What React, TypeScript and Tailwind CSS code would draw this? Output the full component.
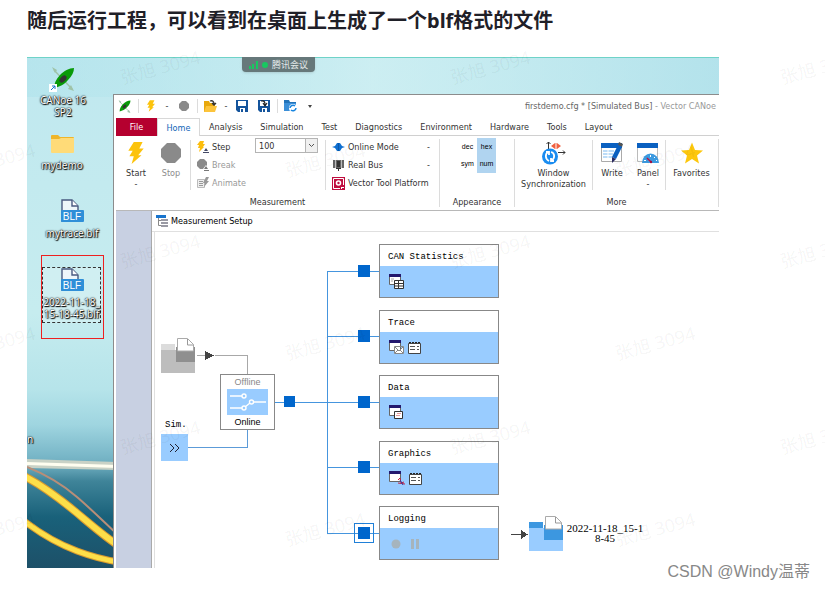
import React from 'react';

type IconProps = { className?: string };

const CanoeIcon: React.FC<IconProps> = ({ className }) => (
  <svg viewBox="0 0 24 24" className={className}>
    <path d="M3 3 L21 22" stroke="#9fc3a8" strokeWidth="1.4" />
    <path d="M1 0 L6 3 L4 6 Z M23 24 L17 22 L20 18 Z" fill="#9fc3a8" />
    <path d="M23 1 C18 1 13 4 9 8 C5 12 3 17 3 21 C8 20 13 18 17 13 C21 9 23 5 23 1 Z" fill="#089a08" />
    <ellipse cx="12" cy="12" rx="4.2" ry="2.6" transform="rotate(-45 12 12)" fill="#333" />
  </svg>
);

const BoltIcon: React.FC<IconProps> = ({ className }) => (
  <svg viewBox="0 0 14 20" className={className}>
    <path d="M5 0 H13 L10 6 H14 L9 12 H12 L3 20 L5 13 H1 L4 8 H0 Z" fill="#fcc30c" />
  </svg>
);

const StopIcon: React.FC<IconProps> = ({ className }) => (
  <svg viewBox="0 0 20 20" className={className}>
    <path d="M6 0 H14 L20 6 V14 L14 20 H6 L0 14 V6 Z" fill="#8a8a8a" />
  </svg>
);

const OpenIcon: React.FC<IconProps> = ({ className }) => (
  <svg viewBox="0 0 13 12" className={className}>
    <path d="M0 1 H5 L6 3 H11 V12 H0 Z" fill="#e8a80c" />
    <path d="M2 6 H13 L11 12 H0 Z" fill="#fcc43c" />
    <path d="M6 1 C9 0 10 2 10 4 M8 3 L10 5 L12 3" stroke="#333" strokeWidth="1.3" fill="none" />
  </svg>
);

const SaveIcon: React.FC<{ arrow?: boolean }> = ({ arrow }) => (
  <svg viewBox="0 0 12 12" className="h-3 w-3">
    <path d="M0 0 H12 V12 H2 L0 10 Z" fill="#14549c" />
    <path d="M2 1 H10 V6 H2 Z M4 8 H9 V12 H4 Z" fill="#fff" />
    <path d="M5 9 H7 V12 H5 Z" fill="#14549c" />
    {arrow && <path d="M3 1 C7 0 7 3 7 5 M5 3 L7 6 L9 3" stroke="#222" strokeWidth="1.2" fill="none" />}
  </svg>
);

const WebFolderIcon = () => (
  <svg viewBox="0 0 13 12" className="h-3 w-[13px]">
    <path d="M0 0 H5 L6 2 H12 V11 H0 Z" fill="#2273b9" />
    <path d="M0 3 H12 V11 H0 Z" fill="#3b8fd8" />
    <circle cx="9" cy="8" r="4" fill="#fff" />
    <path d="M6 8 A3 3 0 0 1 11 6 M12 8 A3 3 0 0 1 7 10" stroke="#1886e0" strokeWidth="1.5" fill="none" />
  </svg>
);

const StepIcon = () => (
  <svg viewBox="0 0 12 12" className="h-3 w-3">
    <path d="M3 0 H7 L6 3 H8 L6 6 H7 L2 11 L3 7 H1 L2 4 H0 Z" fill="#fcbd0c" />
    <path d="M7 10 L9 7 L11 10 Z M6 11 H12 V12 H6 Z" fill="#444a66" />
  </svg>
);

const BreakIcon = () => (
  <svg viewBox="0 0 12 12" className="h-3 w-3">
    <path d="M3 0 H7 L10 3 V7 L7 10 H3 L0 7 V3 Z" fill="#8a8a8a" />
    <path d="M6 10 L9 6 L12 10 V12 H6 Z" fill="#fff" />
    <path d="M7 10 L9 7 L11 10 Z M7 11 H12 V12 H7 Z" fill="#777" />
  </svg>
);

const AnimateIcon = () => (
  <svg viewBox="0 0 12 12" className="h-3 w-3">
    <path d="M.5 2.500 H7.500 V10.500 H.5 Z" fill="#eee" stroke="#bbb" />
    <path d="M2 4.500 H6 M2 6.500 H6 M2 8.500 H6" stroke="#999" />
    <path d="M9 0 H12 L10 4 H12 L7 10 L8 6 H6 Z" fill="#999" />
  </svg>
);

const OnlineIcon = () => (
  <svg viewBox="0 0 13 12" className="h-3 w-[13px]">
    <path d="M0 6 L3 5 L5 2 H8 L10 5 L13 6 L10 7 L8 10 H5 L3 7 Z" fill="#0f6fd0" />
    <path d="M6 2 H7 V10 H6 Z" fill="#0a57ac" />
  </svg>
);

const BusIcon = () => (
  <svg viewBox="0 0 13 12" className="h-3 w-[13px]">
    <path d="M1 1 H12 V9 H1 Z" fill="#666" />
    <path d="M3.500 1 V9 M9.500 1 V9" stroke="#bbb" />
    <path d="M5 2 H8 V8 H5 Z" fill="#333" />
    <path d="M4 9 H9 V10 H7 V12 H6 V10 H4 Z" fill="#333" />
  </svg>
);

const PlatformIcon = () => (
  <svg viewBox="0 0 13 13" className="h-[13px] w-[13px]">
    <path d="M0 0 H13 V13 H0 Z" fill="#bf0d3e" />
    <path d="M1.500 1.500 H11.500 V8 M1.500 1.500 V11.500 H8" stroke="#fff" fill="none" />
    <circle cx="6.500" cy="6" r="2" stroke="#fff" strokeWidth="1.6" fill="none" />
    <path d="M9 10 H12 V12 H9 Z" fill="#fff" />
    <path d="M10 11 H13 V13 H10 Z" fill="#bf0d3e" />
  </svg>
);

const SyncIcon = () => (
  <svg viewBox="0 0 24 24" className="h-6 w-6">
    <path d="M6.500 8 V1 M4.500 3 L6.500 1 L8.500 3 M16 11.500 H23 M21 9.500 L23 11.500 L21 13.500" stroke="#333" fill="none" />
    <path d="M9 5 L13 2 V8 Z M19 5 L15 2 V8 Z" fill="#f06040" />
    <path d="M14 2 V8" stroke="#f06040" />
    <circle cx="8" cy="15.500" r="8" fill="#1a8cf0" />
    <path d="M7 20 C3 18 3 13 6 11 M4 11 H7 V14 M9 11 C13 12 13 17 10 19 M12 20 H9 V17" stroke="#fff" strokeWidth="1.8" fill="none" />
  </svg>
);

const WriteIcon = () => (
  <svg viewBox="0 0 22 22" className="h-[22px] w-[22px]">
    <path d="M.5 2.500 H20.500 V19.500 H.5 Z" fill="#fff" stroke="#aaa" />
    <path d="M0 1 H21 V6 H0 Z" fill="#0a60c0" />
    <path d="M2 9 H13 M2 12 H12 M2 15 H11" stroke="#bcdcf8" strokeWidth="2" />
    <path d="M7 7 V18" stroke="#fff" />
    <path d="M18 0 L22 2 L21 5 L17 3 Z" fill="#555" />
    <path d="M17 3 L21 5 L15 17 L11 15 Z" fill="#0a60c0" />
    <path d="M11 15 L15 17 L11 21 Z" fill="#2a2a60" />
  </svg>
);

const PanelIcon = () => (
  <svg viewBox="0 0 22 22" className="h-[22px] w-[22px]">
    <path d="M.5 2.500 H20.500 V19.500 H.5 Z" fill="#fff" stroke="#bbb" />
    <path d="M0 1 H21 V6 H0 Z" fill="#0a60c0" />
    <path d="M5 21 A8 9 0 0 1 22 21 Z" fill="#3c9ae0" />
    <path d="M10 16 L14 20" stroke="#c01040" strokeWidth="1.400" />
    <circle cx="14" cy="20" r="1.200" fill="#a01040" />
    <path d="M13.500 13 V15 M18 15 L17 16 M7 18.500 H9 M19 18.500 H20" stroke="#fff" />
  </svg>
);

const StarIcon = () => (
  <svg viewBox="0 0 22 21" className="h-[22px] w-[22px]">
    <path d="M11 0 L14 7.500 L22 8 L16 13 L18 21 L11 16.500 L4 21 L6 13 L0 8 L8 7.500 Z" fill="#fdc70c" />
  </svg>
);

const BlfIcon = () => (
  <svg viewBox="0 0 24 24" className="h-6 w-6">
    <path d="M2 1 H12 L18 7 V22 H2 Z" fill="#eef6fa" stroke="#4a5a80" strokeWidth="1.400" />
    <path d="M12 1 V7 H18" fill="#fff" stroke="#4a5a80" strokeWidth="1.400" />
    <rect x="1" y="11" width="23" height="12" rx="1" fill="#2f8fd8" />
    <text x="12" y="21" textAnchor="middle" fontSize="10" fontFamily="Liberation Sans, sans-serif" fill="#fff">BLF</text>
  </svg>
);

const FolderIcon = () => (
  <svg viewBox="0 0 23 20" className="h-5 w-[23px]">
    <path d="M0 2 Q0 1 1 1 H7 L9 3 H22 Q23 3 23 4 V18 H0 Z" fill="#efb52a" />
    <path d="M0 5 H8 L10 4 H23 V18 Q23 19 22 19 H1 Q0 19 0 18 Z" fill="#ffdb78" />
  </svg>
);

const SetupIcon = () => (
  <svg viewBox="0 0 13 12" className="h-3 w-[13px]">
    <path d="M2.500 3 V10.500 H5 M2.500 5.500 H5" stroke="#888" fill="none" />
    <path d="M5 4 H12 V6 H5 Z M5 7 H12 V9 H5 Z M5 10 H12 V12 H5 Z" fill="#9a9aa4" />
    <path d="M0 0 H10 V3 H0 Z" fill="#1874cd" />
  </svg>
);

const Divider: React.FC<{ className?: string }> = ({ className = '' }) => (
  <span className={`w-px shrink-0 bg-[#dcdcdc] ${className}`} />
);

const Wallpaper = () => (
  <svg className="absolute inset-0 h-full w-full" viewBox="0 0 692 511" preserveAspectRatio="xMinYMin slice" aria-hidden="true">
    <defs>
      <linearGradient id="sky" x1="0" y1="0" x2="0" y2="1">
        <stop offset="0" stopColor="#c0e8ef" />
        <stop offset=".5" stopColor="#c6ecef" />
        <stop offset=".65" stopColor="#b6e4ea" />
        <stop offset=".72" stopColor="#9fd5e0" />
        <stop offset=".78" stopColor="#79b7c8" />
        <stop offset=".8" stopColor="#6cabbd" />
        <stop offset=".83" stopColor="#3f8499" />
        <stop offset=".9" stopColor="#19617a" />
        <stop offset="1" stopColor="#1d5068" />
      </linearGradient>
      <linearGradient id="glow" x1="0" y1="0" x2="1" y2="0">
        <stop offset="0" stopColor="#a8e0ea" stopOpacity=".4" />
        <stop offset=".5" stopColor="#d4f2f4" stopOpacity=".6" />
        <stop offset="1" stopColor="#aee0ea" stopOpacity=".7" />
      </linearGradient>
    </defs>
    <rect width="692" height="511" fill="url(#sky)" />
    <rect width="692" height="40" fill="url(#glow)" />
    <path d="M0 402 L90 405 V413 L0 411 Z" fill="#c9d2c6" />
    <path d="M0 405 L90 408 V411 L0 408 Z" fill="#fffef0" />
    <path d="M0 410 C20 418 36 428 50 440 S76 464 90 477" stroke="#b98e78" strokeWidth="2" fill="none" />
    <path d="M-3 419 C20 431 38 446 50 456 S78 480 92 489" stroke="#d99b2f" strokeWidth="8" fill="none" />
    <path d="M-3 419 C20 431 38 446 50 456 S78 480 92 489" stroke="#fddf49" strokeWidth="6" fill="none" />
    <path d="M-3 464 C14 477 34 488 50 494 S78 503 92 505" stroke="#d99b2f" strokeWidth="7" fill="none" />
    <path d="M-3 464 C14 477 34 488 50 494 S78 503 92 505" stroke="#fddf49" strokeWidth="5" fill="none" />
    <rect width="692" height="1" fill="#6fd3c8" />
  </svg>
);

const labelClass =
  'text-center font-["Noto_Sans",sans-serif] text-[10px] leading-3 text-white [text-shadow:0_0_1px_#000,0_0_2px_#000,1px_1px_1px_#000]';

const DesktopIcons = () => (
  <div className="flex w-[86px] shrink-0 flex-col pt-[9px]">
    <div className="flex w-[72px] flex-col items-center">
      <div className="relative">
        <CanoeIcon className="h-[26px] w-6" />
        <svg viewBox="0 0 8 8" className="absolute -left-0.5 bottom-0 h-2 w-2">
          <path d="M0 0 H8 V8 H0 Z" fill="#fff" />
          <path d="M2 6 L6 2 M3 2 H6 V5" stroke="#1874cd" fill="none" />
        </svg>
      </div>
      <span className={`mt-0.5 ${labelClass}`}>CANoe 16<br />SP2</span>
    </div>
    <div className="mt-4 flex w-[70px] flex-col items-center">
      <FolderIcon />
      <span className={`mt-[5px] ${labelClass}`}>mydemo</span>
    </div>
    <div className="mt-7 ml-2 flex w-[74px] flex-col items-center">
      <BlfIcon />
      <span className={`mt-1 ${labelClass}`}>mytrace.blf</span>
    </div>
    <div className="mt-4 ml-3.5 h-[84px] w-[63px] border border-[#ee2020] pt-[11px]">
      <div className="flex w-[59px] flex-col items-center border border-dashed border-[#333] bg-white/20">
        <BlfIcon />
        <span className={`mt-1 pb-0.5 ${labelClass}`}>2022-11-18_<br />15-18-45.blf</span>
      </div>
    </div>
    <span className={`mt-[94px] self-start ${labelClass}`}>n</span>
  </div>
);

const QuickAccess = () => {
  const btn = 'flex h-5 shrink-0 items-center justify-center';
  return (
    <div className="flex h-[22px] items-center">
      <button className={`${btn} w-4`} aria-label="CANoe"><CanoeIcon className="h-[13px] w-[13px]" /></button>
      <Divider className="ml-1.5 h-3.5" />
      <button className={`${btn} w-6`} aria-label="Start"><BoltIcon className="h-3 w-2" /></button>
      <button className={`${btn} w-2`} aria-label="Start options">-</button>
      <button className={`${btn} w-[26px]`} aria-label="Stop"><StopIcon className="h-2.5 w-2.5" /></button>
      <Divider className="h-3.5" />
      <button className={`${btn} w-6`} aria-label="Open"><OpenIcon className="h-3 w-[13px]" /></button>
      <button className={`${btn} w-2`} aria-label="Recent files">-</button>
      <button className={`${btn} w-6`} aria-label="Save"><SaveIcon /></button>
      <button className={`${btn} w-5`} aria-label="Save as"><SaveIcon arrow /></button>
      <Divider className="ml-[3px] h-3.5" />
      <button className={`${btn} w-6`} aria-label="Reload"><WebFolderIcon /></button>
      <button className={`${btn} w-4`} aria-label="Customize">
        <svg viewBox="0 0 4 3" className="h-[3px] w-1"><path d="M0 0 H4 L2 3 Z" fill="#444" /></svg>
      </button>
      <span className="ml-auto pr-[3px] whitespace-nowrap text-[#666]">
        firstdemo.cfg * [Simulated Bus] <span className="text-[#999]">- Vector CANoe</span>
      </span>
    </div>
  );
};

const tabs = ['Analysis', 'Simulation', 'Test', 'Diagnostics', 'Environment', 'Hardware', 'Tools', 'Layout'];

const TabBar = () => (
  <nav className="mt-px flex h-[18px] border-b border-[#d0d0d0]">
    <button className="h-[18px] w-[41px] bg-[#b5002f] text-white">File</button>
    <button className="h-[18px] w-[43px] border-x border-t border-[#d8d8d8] bg-white text-[#1266b8]">Home</button>
    {tabs.map(tab => (
      <button key={tab} className="px-[9px]">{tab}</button>
    ))}
  </nav>
);

interface ToolProps {
  icon: React.ReactNode;
  label: React.ReactNode;
  className: string;
  menu?: boolean;
}

const BigTool: React.FC<ToolProps> = ({ icon, label, className, menu }) => (
  <button className={`flex shrink-0 flex-col items-center pt-[5px] leading-[11px] ${className}`}>
    <span className="flex h-6 items-center">{icon}</span>
    <span className="mt-[3px]">{label}</span>
    {menu && <span className="leading-[10px]">-</span>}
  </button>
);

const SmallTool: React.FC<ToolProps> = ({ icon, label, className, menu }) => (
  <button className={`flex h-[18px] items-center gap-[3px] whitespace-nowrap ${className}`}>
    {icon}
    {label}
    {menu && <span className="ml-auto">-</span>}
  </button>
);

const Ribbon = () => (
  <div className="flex h-[75px] border-b border-[#b8b8b8]">
    <section className="flex w-[323px] shrink-0 flex-col">
      <div className="flex h-[58px]">
        <BigTool className="w-10" icon={<BoltIcon className="h-[22px] w-4" />} label="Start" menu />
        <BigTool className="mr-1 w-[30px] text-[#8c8c8c]" icon={<StopIcon className="h-5 w-5" />} label="Stop" />
        <Divider className="my-1" />
        <div className="ml-1.5 flex w-[58px] flex-col pt-0.5">
          <SmallTool className="" icon={<StepIcon />} label="Step" />
          <SmallTool className="text-[#999]" icon={<BreakIcon />} label="Break" />
          <SmallTool className="text-[#999]" icon={<AnimateIcon />} label="Animate" />
        </div>
        <div className="relative mt-0.5 h-[15px] w-[63px]">
          <select aria-label="Step size" className="h-full w-full appearance-none border border-[#b4b4b4] bg-white pl-[3px]">
            <option>100</option>
          </select>
          <span className="pointer-events-none absolute inset-y-0 right-0 flex w-[13px] items-center justify-center border border-[#b4b4b4] bg-[#f0f0f0]">
            <svg viewBox="0 0 5 3" className="h-[3px] w-[5px]"><path d="M0 0 L2.500 2.500 L5 0" stroke="#555" fill="none" /></svg>
          </span>
        </div>
        <Divider className="my-1 ml-[7px]" />
        <div className="ml-1.5 flex w-[98px] flex-col pt-0.5">
          <SmallTool className="" icon={<OnlineIcon />} label="Online Mode" menu />
          <SmallTool className="" icon={<BusIcon />} label="Real Bus" menu />
          <SmallTool className="" icon={<PlatformIcon />} label="Vector Tool Platform" />
        </div>
      </div>
      <h2 className="pt-0.5 text-center">Measurement</h2>
    </section>
    <Divider className="my-[3px]" />
    <section className="flex w-[74px] shrink-0 flex-col">
      <div className="flex h-[58px] pt-0.5 pl-[18px] font-['Liberation_Sans',sans-serif] text-[7px]">
        <div className="flex w-[19px] flex-col text-black">
          <button className="h-[17px]">dec</button>
          <button className="h-[17px]">sym</button>
        </div>
        <div className="flex h-[35px] w-[19px] flex-col bg-[#b0d4f0] text-black">
          <button className="h-[17px]">hex</button>
          <button className="h-[17px]">num</button>
        </div>
      </div>
      <h2 className="pt-0.5 text-center">Appearance</h2>
    </section>
    <Divider className="my-[3px]" />
    <section className="flex min-w-0 flex-1 flex-col">
      <div className="flex h-[58px]">
        <BigTool className="w-[77px]" icon={<SyncIcon />} label={<>Window<br />Synchronization</>} />
        <Divider className="my-1" />
        <BigTool className="w-[38px]" icon={<WriteIcon />} label="Write" />
        <BigTool className="w-[34px]" icon={<PanelIcon />} label="Panel" menu />
        <Divider className="my-1" />
        <BigTool className="w-[51px]" icon={<StarIcon />} label="Favorites" />
      </div>
      <h2 className="pt-0.5 text-center">More</h2>
    </section>
    <Divider className="my-[3px]" />
  </div>
);

const WindowGlyph = () => (
  <>
    <path d="M.5 1.500 H11.500 V10.500 H.5 Z" fill="#fff" stroke="#666" />
    <path d="M0 0 H12 V3 H0 Z" fill="#23186e" />
  </>
);

const GridWindow = () => (
  <svg viewBox="0 0 15 15" className="h-[15px] w-[15px]">
    <WindowGlyph />
    <path d="M2 5 H5 M2 7 H4" stroke="#aaa" />
    <path d="M5.500 6.500 H14.500 V14.500 H5.500 Z M5 9.500 H15 M5 12 H15 M9.500 6 V15" stroke="#333" fill="#fff" />
  </svg>
);

const MailWindow = () => (
  <svg viewBox="0 0 15 15" className="h-[15px] w-[15px]">
    <WindowGlyph />
    <path d="M5.500 6.500 H14.500 V13.500 H5.500 Z M6 7 L10 11 L14 7 M6 13 L9 10 M14 13 L11 10" stroke="#888" fill="#fff" />
  </svg>
);

const TextWindow = () => (
  <svg viewBox="0 0 15 15" className="h-[15px] w-[15px]">
    <WindowGlyph />
    <path d="M5.500 6.500 H13.500 V13.500 H5.500 Z" stroke="#333" fill="#fff" />
    <path d="M8 8.500 H12 M7 10.500 H11" stroke="#e89a9a" />
  </svg>
);

const CurveWindow = () => (
  <svg viewBox="0 0 16 15" className="h-[15px] w-4">
    <WindowGlyph />
    <path d="M9 9 L11 7 L12 12 L15 11 M9 12 L16 13" stroke="#c02040" fill="none" />
    <path d="M11 9 L14 14" stroke="#3040a0" fill="none" />
  </svg>
);

const NotepadGlyph = () => (
  <svg viewBox="0 0 13 13" className="h-[13px] w-[13px]">
    <path d="M.5 2.500 H12.500 V12.500 H.5 Z" fill="#fff" stroke="#444" />
    <path d="M1 1.500 H12" stroke="#222" strokeDasharray="2 1" />
    <path d="M2 5.500 H7 M9 5.500 H11 M2 8.500 H7 M9 8.500 H11" stroke="#555" />
  </svg>
);

const RecordGlyph = () => (
  <svg viewBox="0 0 30 12" className="ml-0.5 h-3 w-[30px]">
    <circle cx="5" cy="6" r="4.500" fill="#a6b4bd" />
    <path d="M20 1 H23 V11 H20 Z M25 1 H28 V11 H25 Z" fill="#a6b4bd" />
  </svg>
);

const DocFolder: React.FC<{ back: string; front: string; dark: string; className: string }> = ({ back, front, dark, className }) => (
  <svg viewBox="0 0 34 35" className={className}>
    <path d="M0 6 H14 V12 H0 Z" fill={back} />
    <path d="M0 12 H34 V35 H0 Z" fill={front} />
    <path d="M15 9 H34 V24 H15 Z" fill={dark} />
    <path d="M16.500 .5 H26.500 L32.500 6.500 V13 H16.500 Z" fill="#fff" stroke="#aaa" />
    <path d="M26.500 1 V7 H32.500" fill="none" stroke="#999" />
  </svg>
);

const blocks = [
  { title: 'CAN Statistics', place: 'top-3', icons: <GridWindow /> },
  { title: 'Trace', place: 'top-[78px]', icons: <><MailWindow /><NotepadGlyph /></> },
  { title: 'Data', place: 'top-[143px]', icons: <TextWindow /> },
  { title: 'Graphics', place: 'top-[209px]', icons: <><CurveWindow /><NotepadGlyph /></> },
  { title: 'Logging', place: 'top-[274px]', icons: <RecordGlyph /> },
];

const branchYs = [39, 104, 170, 235, 301];

const MeasurementCanvas = () => (
  <div className="relative h-[336px] overflow-hidden bg-white">
    <svg className="absolute top-0 left-0 h-[336px] w-[564px]" viewBox="0 0 564 336" shapeRendering="crispEdges">
      <path d="M42 123.500 H50 M60 123.500 H92.500 V142" stroke="#a8a8a8" fill="none" />
      <path d="M50 119 L59 123.500 L50 128 Z" fill="#444" />
      <path d="M33 215.500 H92.500 V198" stroke="#5c9bd8" fill="none" />
      <path d="M120 170.500 H172" stroke="#4595de" />
      <path d="M172.500 39 V302" stroke="#4595de" />
      {branchYs.map(y => (
        <g key={y}>
          <path d={`M172 ${y}.5 H224`} stroke="#4595de" />
          <rect x="203" y={y - 6} width="12" height="12" fill="#0066cc" />
        </g>
      ))}
      <rect x="199.500" y="291.500" width="19" height="19" stroke="#2080d8" fill="none" />
      <rect x="129" y="164" width="11" height="11" fill="#0066cc" />
      <path d="M356 302.500 H367" stroke="#444" />
      <path d="M366 298 L373 302.500 L366 307 Z" fill="#444" />
    </svg>

    <DocFolder className="absolute top-[106px] left-1.5 h-[35px] w-[34px]" back="#dcdcdc" front="#bdbdbd" dark="#8f8f8f" />
    <span className="absolute top-[187px] left-2.5 font-['Liberation_Mono',monospace] text-[9px] leading-3 text-black">Sim.</span>
    <div className="absolute top-[202px] left-1.5 flex h-[27px] w-[27px] items-center justify-center bg-[#99ccff]">
      <svg viewBox="0 0 11 8" className="h-2 w-[11px]">
        <path d="M1 0 L5 4 L1 8 M6 0 L10 4 L6 8" stroke="#223" fill="none" />
      </svg>
    </div>

    <div className="absolute top-[142px] left-[65px] flex h-14 w-[55px] flex-col items-center border border-[#888] bg-white font-['Liberation_Sans',sans-serif] text-[9px] leading-[14px]">
      <span className="text-[#888]">Offline</span>
      <svg viewBox="0 0 41 26" className="h-[26px] w-[41px]">
        <path d="M0 0 H41 V26 H0 Z" fill="#99ccff" />
        <path d="M3 7 H15 M3 19 H15 M18 18 L23 14 M26 13 H39" stroke="#fff" strokeWidth="1.400" />
        <g fill="#99ccff" stroke="#fff" strokeWidth="1.400">
          <circle cx="17" cy="7" r="2" />
          <circle cx="17" cy="19" r="2" />
          <circle cx="24.500" cy="13" r="2" />
        </g>
      </svg>
      <span className="text-black">Online</span>
    </div>

    {blocks.map(block => (
      <div key={block.title} className={`absolute left-56 flex h-[54px] w-[120px] flex-col border border-[#888] bg-[#99ccff] ${block.place}`}>
        <h3 className="h-[21px] bg-white pt-1 pl-2 font-['Liberation_Mono',monospace] text-[9px] leading-[17px] text-black">{block.title}</h3>
        <div className="flex flex-1 items-center gap-1 pl-[9px]">{block.icons}</div>
      </div>
    ))}

    <DocFolder className="absolute top-[284px] left-[374px] h-[35px] w-[34px]" back="#3c97e0" front="#99ccff" dark="#3c97e0" />
    <p className="absolute top-[291px] left-[408px] w-[84px] text-center font-['Liberation_Serif',serif] text-[11px] leading-[10px] text-black">
      2022-11-18_15-1<br />8-45
    </p>
  </div>
);

const CanoeWindow = () => (
  <div className="border-t border-l border-[#8c8c8c] bg-white pl-0.5 font-['DejaVu_Sans_Condensed','DejaVu_Sans',sans-serif] text-[9px] leading-3 text-[#333]">
    <QuickAccess />
    <TabBar />
    <Ribbon />
    <div className="flex">
      <aside className="w-[35px] shrink-0 bg-[#c8d0e2]" />
      <div className="min-w-0 flex-1 border-l border-[#aaa]">
        <div className="flex h-[21px] items-center gap-0.5 border-b border-[#e0e0e0] pl-1 text-black">
          <SetupIcon />
          <h2>Measurement Setup</h2>
        </div>
        <div className="ml-0.5 border-l border-[#e0e0e0]">
          <MeasurementCanvas />
        </div>
      </div>
    </div>
  </div>
);

const stampRows = [67, 160, 251, 343, 437, 529];

const Stamps = () => (
  <div className="pointer-events-none absolute inset-0 overflow-hidden" aria-hidden="true">
    {stampRows.map((y, row) =>
      (row % 2 === 0 ? [160, 490, 820] : [-5, 325, 655]).map(x => (
        <span
          key={`${x}-${y}`}
          className="absolute w-24 -translate-x-1/2 -translate-y-1/2 -rotate-15 text-center font-['Noto_Sans','Noto_Sans_CJK_SC',sans-serif] text-[18px] leading-6 text-black/5"
          style={{ left: x, top: y }}
        >
          张旭 3094
        </span>
      ))
    )}
  </div>
);

const App: React.FC = () => (
  <main className="relative min-h-screen overflow-hidden bg-white pb-[22px]">
    <h1 className="px-[27px] pt-[7px] pb-[22px] font-['Noto_Sans','Noto_Sans_CJK_SC',sans-serif] text-[20px] leading-7 font-bold whitespace-nowrap text-[#1f2028]">
      随后运行工程，可以看到在桌面上生成了一个blf格式的文件
    </h1>
    <div className="relative mr-[106px] ml-[27px] overflow-hidden">
      <Wallpaper />
      <div className="relative flex">
        <DesktopIcons />
        <div className="min-w-0 flex-1">
          <div className="h-[37px] pl-[129px]">
            <div className="flex h-[15px] w-[73px] items-center justify-center gap-1 rounded-b-sm bg-[#66787a] font-['Noto_Sans_CJK_SC',sans-serif] text-[9px] leading-3 whitespace-nowrap text-[#e4eaea] shadow-sm">
              <svg viewBox="0 0 9 8" className="h-2 w-[9px]">
                <path d="M0 5 H2 V8 H0 Z M3 3 H5 V8 H3 Z M7 0 H9 V8 H7 Z" fill="#18c860" />
              </svg>
              <span className="h-1.5 w-1.5 rounded-full bg-[#18c860]" />
              腾讯会议
            </div>
          </div>
          <CanoeWindow />
        </div>
      </div>
    </div>
    <Stamps />
    <p className="absolute right-[15px] bottom-1.5 font-['Liberation_Sans','Noto_Sans_CJK_SC',sans-serif] text-[16px] leading-6 text-[#888]">
      CSDN @Windy温蒂
    </p>
  </main>
);

export default App;
